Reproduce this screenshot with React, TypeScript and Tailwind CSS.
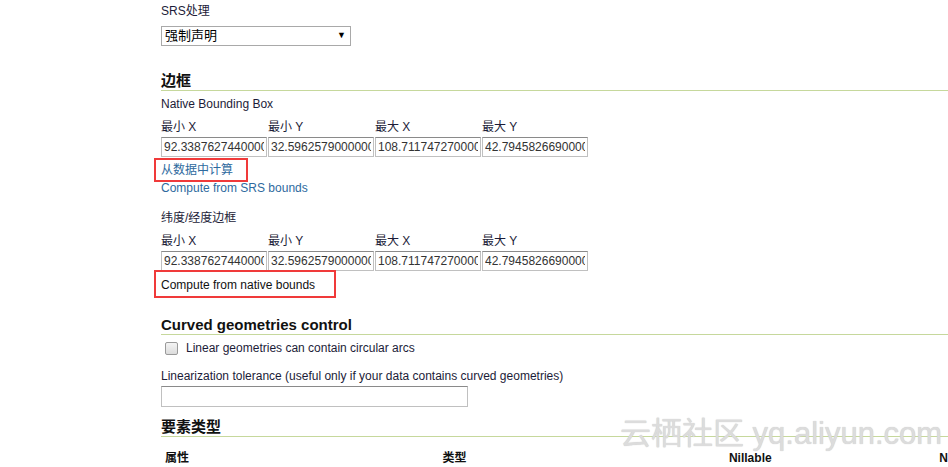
import React from "react";

const coords = ["92.338762744000000", "32.596257900000000", "108.71174727000000", "42.794582669000000"];
const labels = ["最小 X", "最小 Y", "最大 X", "最大 Y"];

function BBoxRow() {
  return (
    <>
      <div className="mt-[7px] flex leading-4">
        {labels.map((l, i) => (
          <div key={i} className="w-[107px]">{l}</div>
        ))}
      </div>
      <div className="mt-[2px] flex gap-px">
        {coords.map((c, i) => (
          <input
            key={i}
            readOnly
            value={c}
            className="h-[20px] w-[106px] border border-[#c0c0c0] border-t-[#8a8a8a] px-[2px] text-[12px] text-[#333] outline-none"
          />
        ))}
      </div>
    </>
  );
}

function Heading({ children, className = "" }: { children: React.ReactNode; className?: string }) {
  return (
    <div className={`border-b border-[#c6d89c] text-[15px] font-bold leading-[18px] text-[#111] ${className}`}>
      {children}
    </div>
  );
}

export default function App() {
  return (
    <div className="relative h-[467px] w-[948px] overflow-hidden bg-white pl-[161px] pt-[3px] font-['Liberation_Sans','Noto_Sans_CJK_SC',sans-serif] text-[12px] text-[#1c1c38]">
      <div className="leading-4">SRS处理</div>
      <div className="mt-[7px] flex h-[20px] w-[190px] items-center justify-between border border-[#a9a9a9] pl-[3px] pr-[4px] text-[13px] text-black">
        <span>强制声明</span>
        <span className="text-[9px]">▼</span>
      </div>

      <Heading className="mt-[26px] text-[14px]">边框</Heading>
      <div className="mt-[5px] leading-4">Native Bounding Box</div>
      <BBoxRow />
      <div className="relative mt-[5px] leading-4 text-[#2e6a9e]">
        从数据中计算
        <div className="absolute left-[-7px] top-[-4px] h-[24px] w-[94px] border-2 border-[#f03a3a]" />
      </div>
      <div className="mt-[2px] leading-4 text-[#2e6a9e]">Compute from SRS bounds</div>

      <div className="mt-[14px] leading-4">纬度/经度边框</div>
      <BBoxRow />
      <div className="relative mt-[6px] leading-4 text-[#111]">
        Compute from native bounds
        <div className="absolute left-[-7px] top-[-7px] h-[28px] w-[182px] border-2 border-[#f03a3a]" />
      </div>

      <Heading className="mt-[23px]">Curved geometries control</Heading>
      <div className="mt-[5px] flex items-center leading-4">
        <span className="ml-[4px] mr-[8px] h-[13px] w-[13px] rounded-[2px] border border-[#9a9a9a] bg-gradient-to-b from-[#f4f4f4] to-[#dcdcdc]" />
        Linear geometries can contain circular arcs
      </div>
      <div className="mt-[12px] leading-4">Linearization tolerance (useful only if your data contains curved geometries)</div>
      <div className="mt-[2px] h-[21px] w-[307px] border border-[#c0c0c0] border-t-[#8a8a8a]" />

      <Heading className="mt-[11px] text-[14px]">要素类型</Heading>
      <div className="mt-[13px] flex font-bold leading-4 text-[#111]">
        <div className="w-[285px] pl-[4px]">属性</div>
        <div className="w-[290px]">类型</div>
        <div className="w-[213px]">Nillable</div>
        <div>N</div>
      </div>

      <div className="pointer-events-none absolute left-[620px] top-[420px] whitespace-nowrap text-[31px] leading-[28px] text-[#dcdcdc] [text-shadow:0_0_1px_#c4c4c4]">
        云栖社区 yq.aliyun.com
      </div>
    </div>
  );
}
